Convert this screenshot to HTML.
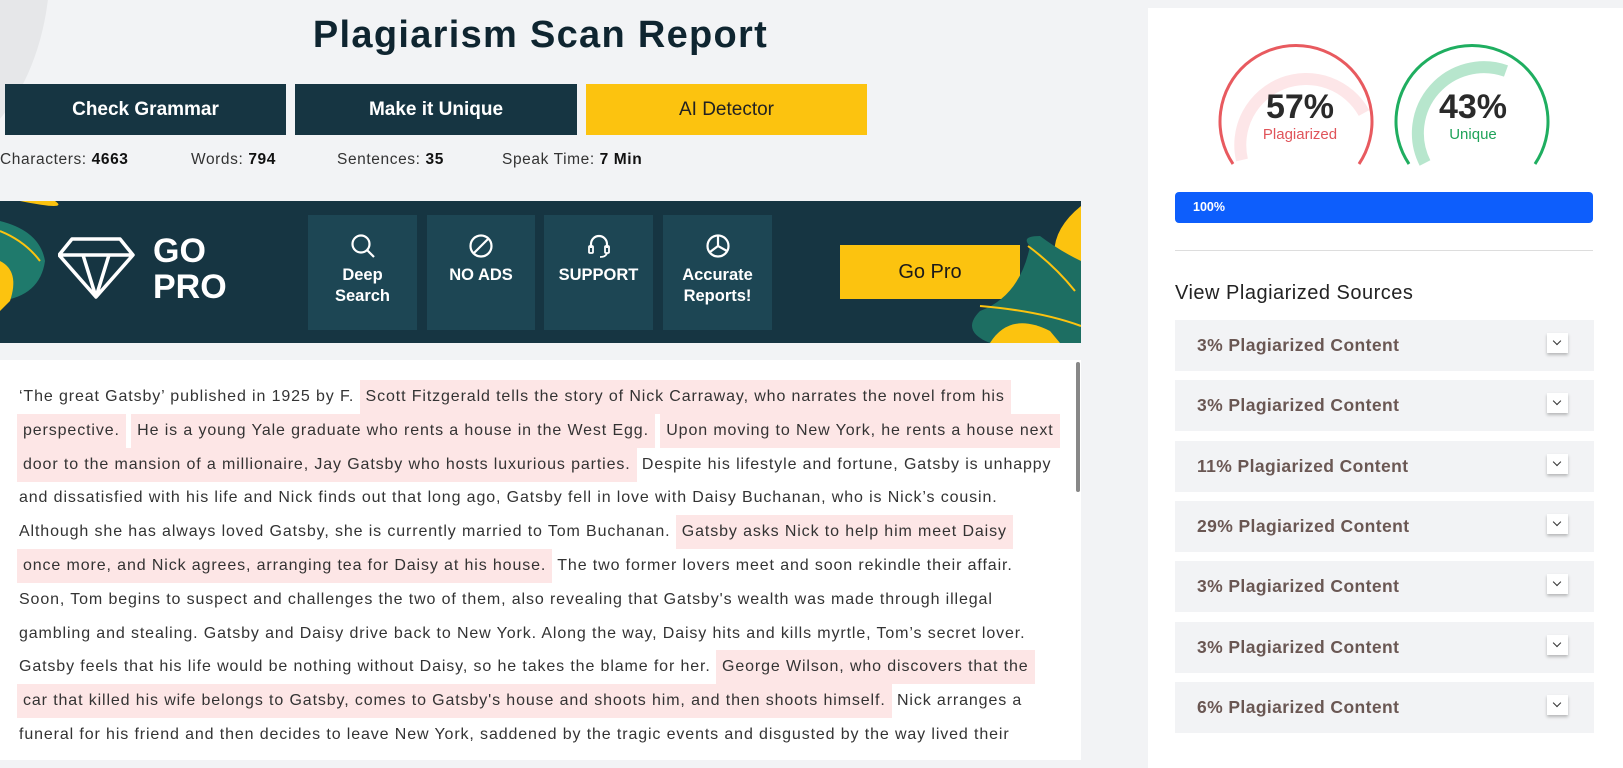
<!DOCTYPE html>
<html><head><meta charset="utf-8">
<style>
*{box-sizing:border-box;margin:0;padding:0}
body{width:1623px;height:747px;overflow:hidden;background:#f2f3f5;font-family:"Liberation Sans",sans-serif;position:relative;color:#222}
.abs{position:absolute}
.circ{left:-210px;top:-230px;width:260px;height:390px;border-radius:50%;background:#e6e7e9}
h1{position:absolute;left:0;width:1081px;top:14px;text-align:center;font-size:38px;font-weight:bold;color:#0f2530;letter-spacing:1.3px}
.btn{position:absolute;top:84px;height:51px;display:flex;align-items:center;justify-content:center;font-size:19px;font-weight:bold;color:#fff;background:#163542}
.stats{top:151px;font-size:15.5px;color:#333;letter-spacing:.6px}
.stats b{color:#111}
.banner{left:0;top:201px;width:1081px;height:142px;background:#163542;overflow:hidden}
.feat{position:absolute;top:14px;height:115px;background:#1d4654;color:#fff;font-weight:bold;font-size:16.5px;text-align:center;line-height:21px;padding-top:18px}
.feat svg{display:block;margin:0 auto 6px}
.gopro{position:absolute;left:840px;top:44px;width:180px;height:54px;background:#fcc30f;color:#1a1a1a;font-size:20px;display:flex;align-items:center;justify-content:center}
.card{left:0;top:360px;width:1081px;height:400px;background:#fff}
.txt{position:absolute;left:19px;top:20px;font-size:16px;letter-spacing:.88px;color:#333;line-height:33.8px;white-space:nowrap}
.h{background:#fde6e6;padding:8px 6px 9px 6px}
.sb{left:1076px;top:362px;width:4px;height:130px;background:#888;border-radius:2px}
.rc{left:1148px;top:8px;width:475px;height:760px;background:#fff}
.bar{left:1175px;top:192px;width:418px;height:31px;background:#0d5efc;border-radius:4px;color:#fff;font-weight:bold;font-size:12.5px;line-height:31px;padding-left:18px}
.sep{left:1175px;top:250px;width:418px;height:1px;background:#ddd}
.vps{left:1175px;top:282px;font-size:20px;color:#222;letter-spacing:.5px}
.acc{position:absolute;left:1175px;width:419px;height:51px;background:#f2f3f5;font-weight:bold;font-size:17.5px;color:#6a5753;line-height:51px;padding-left:22px;letter-spacing:.4px}
.acc i{position:absolute;right:26px;top:13px;width:21px;height:20px;background:#fff;box-shadow:0 2px 3px rgba(0,0,0,.25);font-style:normal}
.acc i:after{content:"";position:absolute;left:7px;top:5px;width:5px;height:5px;border-right:1.6px solid #333;border-bottom:1.6px solid #333;transform:rotate(45deg)}
</style></head><body>
<div class="abs circ"></div>
<h1>Plagiarism Scan Report</h1>
<div class="btn" style="left:5px;width:281px">Check Grammar</div>
<div class="btn" style="left:295px;width:282px">Make it Unique</div>
<div class="btn" style="left:586px;width:281px;background:#fcc30f;color:#222;font-weight:normal">AI Detector</div>
<div class="abs stats" style="left:0">Characters: <b>4663</b></div>
<div class="abs stats" style="left:191px">Words: <b>794</b></div>
<div class="abs stats" style="left:337px">Sentences: <b>35</b></div>
<div class="abs stats" style="left:502px">Speak Time: <b>7 Min</b></div>

<div class="abs banner">
<svg class="abs" style="left:0;top:0" width="80" height="142"><path d="M20 0 Q70 10 55 0Z" fill="#fcc30f"/><path d="M0 20 Q40 30 45 60 Q40 95 0 100Z" fill="#1f7a6c"/><path d="M0 60 Q20 70 10 100 L0 110Z" fill="#fcc30f"/><path d="M0 30 Q25 40 40 60" stroke="#fcc30f" stroke-width="2" fill="none"/></svg>
<svg class="abs" style="left:58px;top:30px" width="190" height="70">
<path d="M14 8 H62 L75 24 L38 66 L1 24 Z M1 24 H75 M25 24 L38 66 L51 24" fill="none" stroke="#fff" stroke-width="3.5" stroke-linejoin="round"/>
<text x="95" y="31" fill="#fff" font-size="34" font-weight="bold" font-family="Liberation Sans">GO</text>
<text x="95" y="67" fill="#fff" font-size="34" font-weight="bold" font-family="Liberation Sans">PRO</text>
</svg>
<div class="feat" style="left:308px;width:109px"><svg width="26" height="26"><circle cx="11" cy="11" r="8.5" stroke="#fff" stroke-width="2.2" fill="none"/><path d="M17 17 L24 24" stroke="#fff" stroke-width="2.2"/></svg>Deep<br>Search</div>
<div class="feat" style="left:427px;width:108px"><svg width="26" height="26"><circle cx="13" cy="13" r="10.5" stroke="#fff" stroke-width="2.2" fill="none"/><path d="M6 20 L20 6" stroke="#fff" stroke-width="2.2"/></svg>NO ADS</div>
<div class="feat" style="left:544px;width:109px"><svg width="26" height="26"><path d="M5 15 V11 A8 8 0 0 1 21 11 V15" stroke="#fff" stroke-width="2.2" fill="none"/><rect x="3" y="13" width="4" height="7" rx="1" stroke="#fff" stroke-width="1.8" fill="none"/><rect x="19" y="13" width="4" height="7" rx="1" stroke="#fff" stroke-width="1.8" fill="none"/><path d="M21 20 Q20 24 14 24" stroke="#fff" stroke-width="1.8" fill="none"/></svg>SUPPORT</div>
<div class="feat" style="left:663px;width:109px"><svg width="26" height="26"><circle cx="13" cy="13" r="10.5" stroke="#fff" stroke-width="2.2" fill="none"/><path d="M13 2.5 V13 L22 18 M13 13 L5 19" stroke="#fff" stroke-width="2.2" fill="none"/></svg>Accurate<br>Reports!</div>
<div class="gopro">Go Pro</div>
<svg class="abs" style="left:930px;top:0" width="151" height="142"><path d="M151 5 Q120 30 125 60 L151 70Z" fill="#fcc30f"/><path d="M100 45 Q90 35 110 35 Q130 50 151 60 V142 H60 Q30 130 50 110 Q90 95 100 45Z" fill="#1d6e62"/><path d="M60 142 Q80 110 120 130 L130 142Z" fill="#fcc30f"/><path d="M50 105 Q110 110 151 125" stroke="#fcc30f" stroke-width="2" fill="none"/><path d="M98 45 Q125 65 145 90" stroke="#fcc30f" stroke-width="2" fill="none"/></svg>
</div>

<div class="abs card">
<div class="txt">
‘The great Gatsby’ published in 1925 by F. <span class="h">Scott Fitzgerald tells the story of Nick Carraway, who narrates the novel from his</span><br>
<span class="h" style="margin-left:-2px">perspective.</span> <span class="h">He is a young Yale graduate who rents a house in the West Egg.</span> <span class="h">Upon moving to New York, he rents a house next</span><br>
<span class="h" style="margin-left:-2px">door to the mansion of a millionaire, Jay Gatsby who hosts luxurious parties.</span> Despite his lifestyle and fortune, Gatsby is unhappy<br>
and dissatisfied with his life and Nick finds out that long ago, Gatsby fell in love with Daisy Buchanan, who is Nick’s cousin.<br>
Although she has always loved Gatsby, she is currently married to Tom Buchanan. <span class="h">Gatsby asks Nick to help him meet Daisy</span><br>
<span class="h" style="margin-left:-2px">once more, and Nick agrees, arranging tea for Daisy at his house.</span> The two former lovers meet and soon rekindle their affair.<br>
Soon, Tom begins to suspect and challenges the two of them, also revealing that Gatsby's wealth was made through illegal<br>
gambling and stealing. Gatsby and Daisy drive back to New York. Along the way, Daisy hits and kills myrtle, Tom’s secret lover.<br>
Gatsby feels that his life would be nothing without Daisy, so he takes the blame for her. <span class="h">George Wilson, who discovers that the</span><br>
<span class="h" style="margin-left:-2px">car that killed his wife belongs to Gatsby, comes to Gatsby's house and shoots him, and then shoots himself.</span> Nick arranges a<br>
funeral for his friend and then decides to leave New York, saddened by the tragic events and disgusted by the way lived their
</div>
</div>
<div class="abs sb"></div>

<div class="abs rc"></div>
<svg class="abs" style="left:1200px;top:38px" width="370" height="128">
<path d="M33 126 A76 76 0 1 1 159 126" fill="none" stroke="#e85a5f" stroke-width="3"/>
<path d="M42 122 A66 66 0 0 1 164 75" fill="none" stroke="#fde6e8" stroke-width="12"/>
<path d="M209 126 A76 76 0 1 1 335 126" fill="none" stroke="#1fae60" stroke-width="3"/>
<path d="M225 125 A66 66 0 0 1 306 33" fill="none" stroke="#b7e6cd" stroke-width="12"/>
<text x="100" y="80" text-anchor="middle" font-size="34" font-weight="bold" fill="#2a2a2a" font-family="Liberation Sans">57%</text>
<text x="100" y="101" text-anchor="middle" font-size="15" fill="#e0545a" font-family="Liberation Sans">Plagiarized</text>
<text x="273" y="80" text-anchor="middle" font-size="34" font-weight="bold" fill="#2a2a2a" font-family="Liberation Sans">43%</text>
<text x="273" y="101" text-anchor="middle" font-size="15" fill="#1fa35a" font-family="Liberation Sans">Unique</text>
</svg>
<div class="abs bar">100%</div>
<div class="abs sep"></div>
<div class="abs vps">View Plagiarized Sources</div>
<div class="acc" style="top:320px">3% Plagiarized Content<i></i></div>
<div class="acc" style="top:380px">3% Plagiarized Content<i></i></div>
<div class="acc" style="top:441px">11% Plagiarized Content<i></i></div>
<div class="acc" style="top:501px">29% Plagiarized Content<i></i></div>
<div class="acc" style="top:561px">3% Plagiarized Content<i></i></div>
<div class="acc" style="top:622px">3% Plagiarized Content<i></i></div>
<div class="acc" style="top:682px">6% Plagiarized Content<i></i></div>
</body></html>
